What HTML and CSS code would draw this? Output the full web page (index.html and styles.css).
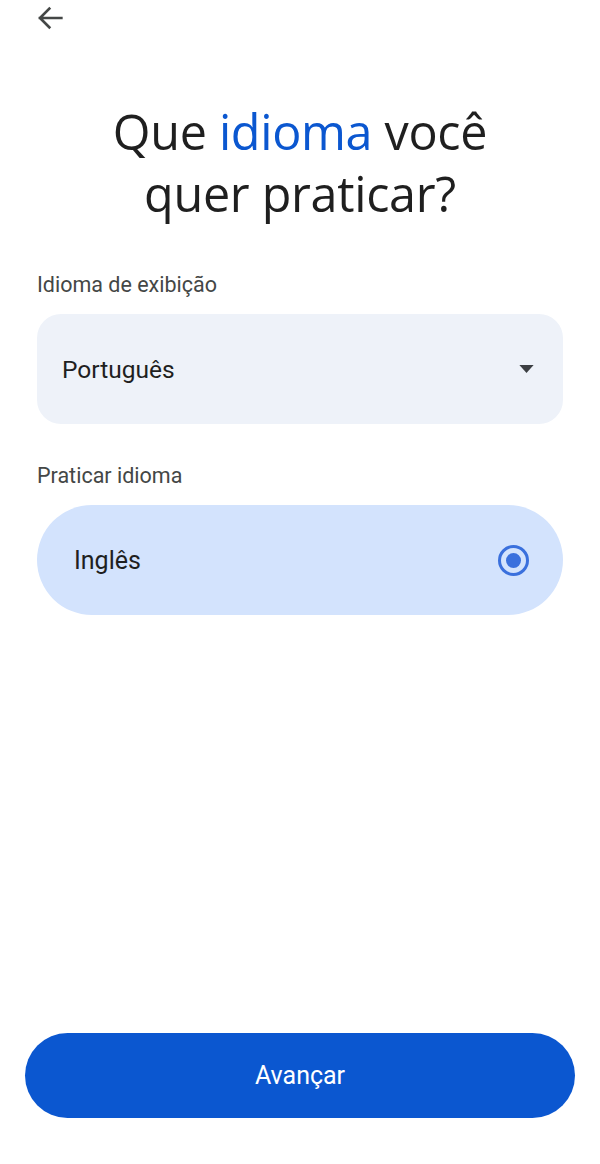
FILE: index.html
```html
<!DOCTYPE html>
<html lang="pt">
<head>
<meta charset="utf-8">
<title>Idioma</title>
<link rel="stylesheet" href="styles.css">
</head>
<body>
<div class="screen">
  <header class="topbar">
    <button class="back" aria-label="Voltar">
      <svg viewBox="0 0 24 24" width="32" height="32"><path d="M20.5 12H4.5M11.5 5L4.5 12l7 7" fill="none" stroke="#444746" stroke-width="2" stroke-linecap="square" stroke-linejoin="miter"/></svg>
    </button>
  </header>
  <h1 class="title">Que <span class="accent">idioma</span> você<br>quer praticar?</h1>
  <section class="field">
    <div class="label">Idioma de exibição</div>
    <div class="select">
      <span class="select-text">Português</span>
      <svg class="caret" viewBox="0 0 16 9" width="15" height="8"><path d="M0 0h16L8 9z" fill="#3c3f43"/></svg>
    </div>
  </section>
  <section class="field field-2">
    <div class="label">Praticar idioma</div>
    <div class="option">
      <span class="option-text">Inglês</span>
      <span class="radio"><span class="dot"></span></span>
    </div>
  </section>
  <div class="spacer"></div>
  <button class="primary">Avançar</button>
</div>
</body>
</html>
```
FILE: styles.css
```css
html, body {
  margin: 0;
  padding: 0;
  background: #ffffff;
}
.screen {
  display: flex;
  flex-direction: column;
  min-height: 1164px;
  box-sizing: border-box;
  padding: 0 37px 46px;
  font-family: Roboto, "Liberation Sans", sans-serif;
}
.topbar {
  height: 36px;
  display: flex;
  align-items: center;
}
.back {
  width: 32px;
  height: 32px;
  padding: 0;
  margin-left: -3px;
  margin-top: -1px;
  border: none;
  background: none;
  display: flex;
  align-items: center;
  justify-content: center;
}
.title {
  margin: 64px 0 0;
  text-align: center;
  font-family: "Open Sans", sans-serif;
  font-weight: 400;
  font-size: 48.5px;
  line-height: 62px;
  color: #1f1f1f;
  letter-spacing: -0.3px;
}
.accent {
  color: #0b57d0;
}
.field {
  margin-top: 49px;
}
.field-2 {
  margin-top: 40px;
}
.label {
  font-size: 21.5px;
  line-height: 24px;
  color: #444746;
  margin-bottom: 17px;
}
.select {
  height: 110px;
  border-radius: 24px;
  background: #eef2f9;
  display: flex;
  align-items: center;
  justify-content: space-between;
  padding: 0 29px 0 25px;
}
.select-text {
  font-size: 24.5px;
  color: #1f1f1f;
}
.option {
  height: 110px;
  border-radius: 55px;
  background: #d3e3fd;
  display: flex;
  align-items: center;
  justify-content: space-between;
  padding: 0 34px 0 37px;
}
.option-text {
  font-size: 25px;
  color: #1f1f1f;
}
.radio {
  width: 25px;
  height: 25px;
  border: 3px solid #3a70dd;
  border-radius: 50%;
  display: flex;
  align-items: center;
  justify-content: center;
}
.dot {
  width: 15px;
  height: 15px;
  border-radius: 50%;
  background: #3a70dd;
}
.spacer {
  flex: 1;
}
.primary {
  margin: 0 -12px;
  height: 85px;
  border: none;
  border-radius: 43px;
  background: #0b57d0;
  color: #ffffff;
  font-family: Roboto, "Liberation Sans", sans-serif;
  font-size: 25px;
}
```
